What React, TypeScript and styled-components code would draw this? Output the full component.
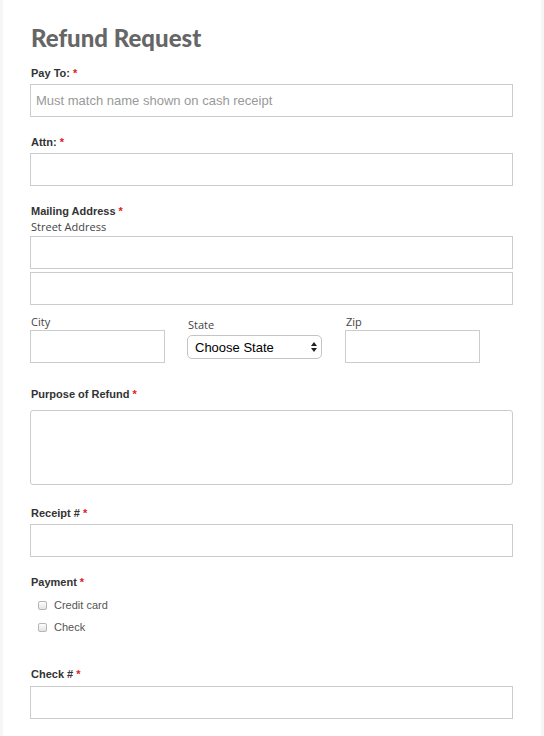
import styled, { createGlobalStyle } from 'styled-components';

const GlobalStyle = createGlobalStyle`
  html, body {
    margin: 0;
    padding: 0;
    background: #f6f6f6;
  }
  * {
    box-sizing: border-box;
  }
`;

const Page = styled.div`
  margin: 0 3px;
  min-height: 100vh;
  background: #ffffff;
  padding: 22px 28px 10px 27px;
`;

const Title = styled.h1`
  margin: 0 0 11px 1px;
  font-family: Lato, 'Open Sans', sans-serif;
  font-weight: 900;
  font-size: 24px;
  line-height: 32px;
  color: #666666;
`;

const Field = styled.div<{ $gap?: number }>`
  margin-bottom: ${(p) => p.$gap ?? 17}px;
`;

const Label = styled.div<{ $space?: number }>`
  margin: 0 0 ${(p) => p.$space ?? 3}px 1px;
  font-family: 'Liberation Sans', Arial, sans-serif;
  font-weight: 700;
  font-size: 11px;
  line-height: 16px;
  color: #333333;
`;

const Req = styled.span`
  color: #e0201b;
  margin-left: 3px;
`;

const SubLabel = styled.div<{ $space?: number }>`
  margin: 0 0 ${(p) => p.$space ?? 0}px 1px;
  font-family: 'Open Sans', sans-serif;
  font-size: 11px;
  line-height: 16px;
  color: #444444;
`;

const TextInput = styled.input`
  display: block;
  width: 100%;
  height: 33px;
  margin: 0;
  padding: 0 5px;
  border: 1px solid #cccccc;
  border-radius: 0;
  background: #ffffff;
  font-family: 'Liberation Sans', Arial, sans-serif;
  font-size: 13px;
  color: #333333;
  outline: none;

  &::placeholder {
    color: #999999;
  }
`;

const Stack = styled.div`
  display: flex;
  flex-direction: column;
  gap: 3px;
`;

const AddressRow = styled.div`
  display: grid;
  grid-template-columns: 157px 158px 135px;
  align-items: start;
  margin-top: 9px;
  margin-bottom: 23px;
`;

const Column = styled.div<{ $offset?: number }>`
  width: 135px;
  padding-top: ${(p) => p.$offset ?? 0}px;
`;

const SelectWrap = styled.div`
  position: relative;
  width: 135px;
  height: 24px;
`;

const Select = styled.select`
  appearance: none;
  -webkit-appearance: none;
  display: block;
  width: 100%;
  height: 24px;
  margin: 0;
  padding: 0 20px 0 7px;
  border: 1px solid #c4c4c4;
  border-radius: 5px;
  background: #ffffff;
  font-family: 'Liberation Sans', Arial, sans-serif;
  font-size: 13px;
  color: #000000;
  outline: none;
`;

const Arrows = styled.svg`
  position: absolute;
  right: 5px;
  top: 7px;
  pointer-events: none;
`;

const TextArea = styled.textarea`
  display: block;
  width: 100%;
  height: 75px;
  margin: 0;
  padding: 6px;
  border: 1px solid #cccccc;
  border-radius: 3px;
  resize: none;
  outline: none;
`;

const Options = styled.div`
  display: flex;
  flex-direction: column;
  padding: 4px 0 0 8px;
`;

const Option = styled.label`
  display: flex;
  align-items: center;
  height: 22px;
  font-family: 'Liberation Sans', Arial, sans-serif;
  font-size: 11px;
  color: #555555;
`;

const Box = styled.input`
  appearance: none;
  -webkit-appearance: none;
  width: 9px;
  height: 9px;
  margin: 0 7px 0 0;
  border: 1px solid #b5b5b5;
  border-radius: 2px;
  background: linear-gradient(#fdfdfd, #e4e4e4);
`;

const Required = () => <Req>*</Req>;

const App = () => {
  return (
    <>
      <GlobalStyle />
      <Page>
        <Title>Refund Request</Title>

        <Field>
          <Label>
            Pay To:<Required />
          </Label>
          <TextInput placeholder="Must match name shown on cash receipt" />
        </Field>

        <Field>
          <Label>
            Attn:<Required />
          </Label>
          <TextInput />
        </Field>

        <Field $gap={0}>
          <Label $space={0}>
            Mailing Address<Required />
          </Label>
          <SubLabel $space={1}>Street Address</SubLabel>
          <Stack>
            <TextInput />
            <TextInput />
          </Stack>
        </Field>

        <AddressRow>
          <Column>
            <SubLabel>City</SubLabel>
            <TextInput />
          </Column>
          <Column $offset={3}>
            <SubLabel $space={2}>State</SubLabel>
            <SelectWrap>
              <Select defaultValue="">
                <option value="">Choose State</option>
              </Select>
              <Arrows width="6" height="10" viewBox="0 0 6 10">
                <path d="M3 0 L6 4 L0 4 Z" fill="#222" />
                <path d="M0 6 L6 6 L3 10 Z" fill="#222" />
              </Arrows>
            </SelectWrap>
          </Column>
          <Column>
            <SubLabel>Zip</SubLabel>
            <TextInput />
          </Column>
        </AddressRow>

        <Field $gap={20}>
          <Label $space={8}>
            Purpose of Refund<Required />
          </Label>
          <TextArea />
        </Field>

        <Field>
          <Label>
            Receipt #<Required />
          </Label>
          <TextInput />
        </Field>

        <Field $gap={28}>
          <Label $space={0}>
            Payment<Required />
          </Label>
          <Options>
            <Option>
              <Box type="checkbox" />
              Credit card
            </Option>
            <Option>
              <Box type="checkbox" />
              Check
            </Option>
          </Options>
        </Field>

        <Field>
          <Label $space={4}>
            Check #<Required />
          </Label>
          <TextInput />
        </Field>
      </Page>
    </>
  );
};

export default App;
